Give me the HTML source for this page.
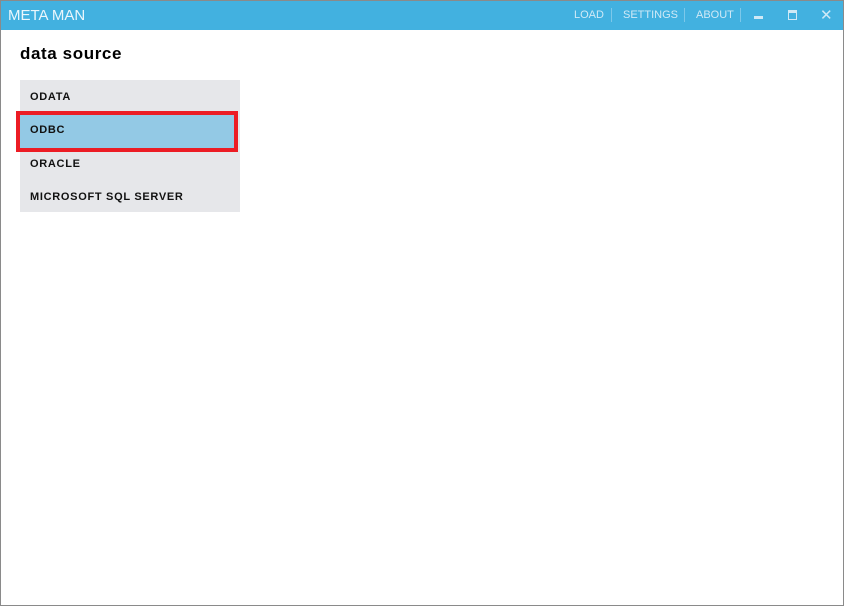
<!DOCTYPE html><html><head><style>
body{margin:0;width:844px;height:606px;overflow:hidden;font-family:"Liberation Sans",sans-serif;position:relative;background:#fff;}
.win{position:absolute;left:0;top:0;width:842px;height:604px;border:1px solid #8a8a8a;}
.bar{position:absolute;left:0;top:0;width:844px;height:30px;background:#42b1e0;}
.title{position:absolute;left:8px;top:7px;font-size:15px;color:#eaf6fc;}
.m{position:absolute;top:9px;font-size:11px;color:#cfe9f6;}
.sep{position:absolute;top:8px;width:1px;height:14px;background:#7cc8ea;}
h1{position:absolute;left:20px;top:44px;margin:0;font-size:17px;font-weight:bold;color:#000;letter-spacing:0.6px;}
.list{position:absolute;left:20px;top:80px;width:220px;height:132px;background:#e6e7ea;}
.it{position:absolute;left:30px;font-size:11px;font-weight:bold;color:#111;letter-spacing:0.7px;}
.sel{position:absolute;left:16px;top:111px;width:214px;height:33px;border:4px solid #ec1c24;background:#93c9e5;}
</style></head><body>
<div class="bar"><div class="title">META MAN</div>
<div class="m" style="left:574px">LOAD</div><div class="sep" style="left:611px"></div>
<div class="m" style="left:623px">SETTINGS</div><div class="sep" style="left:684px"></div>
<div class="m" style="left:696px">ABOUT</div><div class="sep" style="left:740px"></div>
<div style="position:absolute;left:754px;top:16px;width:9px;height:3px;background:#cfe9f6"></div>
<div style="position:absolute;left:788px;top:10px;width:7px;height:6px;border:1px solid #cfe9f6;border-top-width:3px"></div>
<div class="m" style="left:820px;top:6px;font-size:15px">✕</div>
</div>
<div class="win"></div>
<h1>data source</h1>
<div class="list"></div>
<div class="sel"></div>
<div class="it" style="top:91px">ODATA</div>
<div class="it" style="top:124px">ODBC</div>
<div class="it" style="top:158px">ORACLE</div>
<div class="it" style="top:191px">MICROSOFT SQL SERVER</div>
</body></html>
